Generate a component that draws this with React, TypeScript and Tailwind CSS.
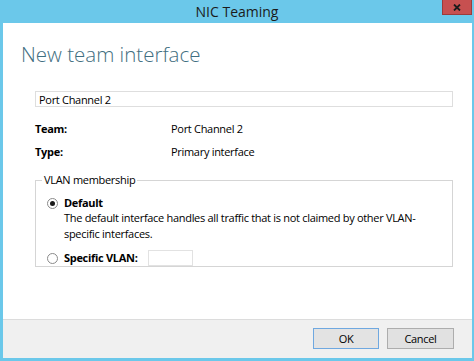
import React, { useState } from 'react';

const font = { fontFamily: '"Open Sans", "Noto Sans", sans-serif' };

const Radio: React.FC<{ checked: boolean; onClick: () => void }> = ({ checked, onClick }) => (
  <span
    onClick={onClick}
    className="flex h-[11px] w-[11px] shrink-0 items-center justify-center rounded-full border border-[#8a8a8a] bg-white"
  >
    {checked && <span className="h-[5px] w-[5px] rounded-full bg-[#1a1a1a]" />}
  </span>
);

const App: React.FC = () => {
  const [mode, setMode] = useState<'default' | 'specific'>('default');

  return (
    <div
      className="flex h-[361px] w-[474px] flex-col bg-[#6bc8ea] text-[11px] tracking-[-0.3px] text-black"
      style={font}
    >
      <div className="relative flex h-[23px] shrink-0 items-center justify-center">
        <span className="text-[14px] leading-none tracking-normal text-[#1b1b1b]">NIC Teaming</span>
        <div className="absolute right-[2px] top-0 flex h-[15px] w-[30px] items-center justify-center border border-t-0 border-[#9c3b3b] bg-[#c75050]">
          <svg width="8" height="7" viewBox="0 0 8 7">
            <path d="M1 0.5 L7 6.5 M7 0.5 L1 6.5" stroke="#1c1c1c" strokeWidth="1.8" />
          </svg>
        </div>
      </div>

      <div className="ml-[3px] mr-[2px] mb-[3px] flex flex-1 flex-col">
        <div className="flex h-[296px] flex-col bg-white pl-[18px] pr-[17px]">
          <h1 className="mt-[18px] text-[20.5px] font-light leading-[26px] tracking-normal text-[#3f6e80]">
            New team interface
          </h1>

          <div className="ml-[14px] mt-[24px] flex h-[16px] w-[418px] items-center border border-[#dedede] px-[3px] leading-none">
            Port Channel 2
          </div>

          <div className="ml-[14px] mt-[14px] flex h-[16px] items-center">
            <span className="w-[136px] font-bold">Team:</span>
            <span>Port Channel 2</span>
          </div>
          <div className="ml-[14px] mt-[7px] flex h-[16px] items-center">
            <span className="w-[136px] font-bold">Type:</span>
            <span>Primary interface</span>
          </div>

          <fieldset className="ml-[14px] mt-[12px] w-[418px] border border-[#d5d5d5] pl-[6px] pr-[6px]">
            <legend className="px-[2px] leading-[16px]">VLAN membership</legend>
            <div className="ml-[5px] mt-[7px] flex h-[16px] items-center gap-[6px]">
              <Radio checked={mode === 'default'} onClick={() => setMode('default')} />
              <span className="font-bold">Default</span>
            </div>
            <p className="ml-[22px] mt-[-1px] whitespace-nowrap leading-[16px]">
              The default interface handles all traffic that is not claimed by other VLAN-
              <br />
              specific interfaces.
            </p>
            <div className="ml-[5px] mt-[8px] flex h-[16px] items-center gap-[6px]">
              <Radio checked={mode === 'specific'} onClick={() => setMode('specific')} />
              <span className="w-[78px] whitespace-nowrap font-bold">Specific VLAN:</span>
              <span className="h-[16px] w-[45px] border border-[#e2e2e2]" />
            </div>
          </fieldset>
        </div>

        <div className="flex flex-1 justify-end gap-[8px] border-t border-[#dcdcdc] bg-[#f0f0f0] pr-[18px] pt-[8px]">
          <button className="h-[21px] w-[66px] border border-[#6fa8e0] bg-[#e3e3e3] leading-none">
            OK
          </button>
          <button className="h-[21px] w-[67px] border border-[#adadad] bg-[#e1e1e1] leading-none">
            Cancel
          </button>
        </div>
      </div>
    </div>
  );
};

export default App;
